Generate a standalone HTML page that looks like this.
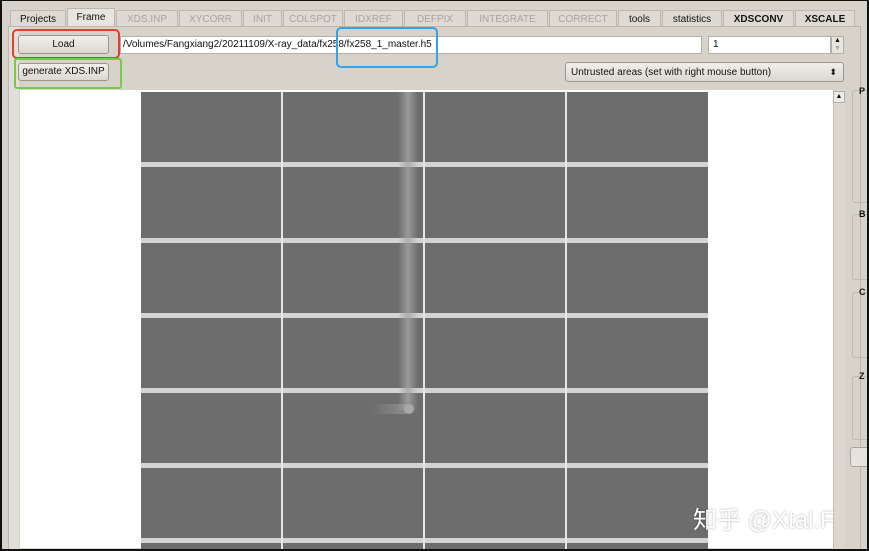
<!DOCTYPE html>
<html><head><meta charset="utf-8"><style>
*{margin:0;padding:0;box-sizing:border-box}
body{width:869px;height:551px;background:#d7d3cb;position:relative;overflow:hidden;font-family:"Liberation Sans",Arial,sans-serif;font-size:10px;color:#111}
.a{position:absolute}
.frame{left:0;top:0;width:869px;height:551px;border:2px solid #111;border-top:1px solid #111}
.tab{position:absolute;top:10px;height:16px;border:1px solid #bdb8ae;border-bottom:none;background:#dedad3;text-align:center;line-height:17px;font-size:10px;color:#a9a49c}
.on{color:#111}
.btn{position:absolute;border:1px solid #9a968f;border-radius:3px;background:linear-gradient(#f1efeb,#dcd8d0);text-align:center;font-size:10px}
.inp{position:absolute;background:#fff;border:1px solid #b4b0a8;font-size:10px;line-height:16px;padding-left:2px}
.hb{position:absolute;left:141px;width:567px;height:5px;background:#d4d4d4}
.vl{position:absolute;top:92px;width:2px;height:459px;background:#e6e6e6}
</style></head><body>
<div class="a" style="left:9px;top:26px;width:10px;height:525px;background:#e2dfd9"></div>
<div class="tab on" style="left:10px;width:56px">Projects</div>
<div class="tab on" style="left:67px;width:48px;top:8px;height:18px;line-height:18px;background:#e8e5df">Frame</div>
<div class="tab" style="left:116px;width:62px">XDS.INP</div>
<div class="tab" style="left:179px;width:63px">XYCORR</div>
<div class="tab" style="left:243px;width:39px">INIT</div>
<div class="tab" style="left:283px;width:60px">COLSPOT</div>
<div class="tab" style="left:344px;width:59px">IDXREF</div>
<div class="tab" style="left:404px;width:62px">DEFPIX</div>
<div class="tab" style="left:467px;width:81px">INTEGRATE</div>
<div class="tab" style="left:549px;width:68px">CORRECT</div>
<div class="tab on" style="left:618px;width:43px">tools</div>
<div class="tab on" style="left:662px;width:60px">statistics</div>
<div class="tab on" style="left:723px;width:71px;font-weight:bold">XDSCONV</div>
<div class="tab on" style="left:795px;width:60px;font-weight:bold">XSCALE</div>
<div class="a" style="left:8px;top:26px;width:853px;height:525px;border:1px solid #bdb8ae;border-bottom:none"></div>

<div class="btn" style="left:18px;top:35px;width:91px;height:19px;line-height:17px">Load</div>
<div class="a" style="left:12px;top:29px;width:108px;height:30px;border:2px solid #e0412b;border-radius:5px"></div>
<div class="btn" style="left:18px;top:63px;width:91px;height:18px;line-height:16px">generate XDS.INP</div>
<div class="a" style="left:14px;top:58px;width:108px;height:31px;border:2px solid #77c94a;border-radius:3px"></div>

<div class="inp" style="left:120px;top:36px;width:582px;height:18px">/Volumes/Fangxiang2/20211109/X-ray_data/fx258/fx258_1_master.h5</div>
<div class="a" style="left:336px;top:27px;width:102px;height:41px;border:2px solid #36a3e0;border-radius:5px"></div>
<div class="inp" style="left:708px;top:36px;width:123px;height:18px;padding-left:4px">1</div>
<div class="a" style="left:831px;top:36px;width:13px;height:18px;background:#e8e5df;border:1px solid #b4b0a8;font-size:7px;line-height:8px;text-align:center">▲<br><span style="color:#aaa">▼</span></div>
<div class="btn" style="left:565px;top:62px;width:279px;height:20px;line-height:19px;text-align:left;padding-left:5px">Untrusted areas (set with right mouse button)<span style="position:absolute;right:6px;font-size:9px">⬍</span></div>

<div class="a" style="left:20px;top:90px;width:813px;height:458px;background:#fff"></div>
<div class="a" style="left:141px;top:92px;width:567px;height:459px;background:#6d6d6d"></div>
<div class="hb" style="top:162px"></div><div class="hb" style="top:238px"></div><div class="hb" style="top:313px"></div>
<div class="hb" style="top:388px"></div><div class="hb" style="top:463px"></div><div class="hb" style="top:538px"></div>
<div class="vl" style="left:281px"></div><div class="vl" style="left:423px"></div><div class="vl" style="left:565px"></div>
<div class="a" style="left:398px;top:92px;width:20px;height:318px;background:linear-gradient(90deg,rgba(150,150,150,0),rgba(165,165,165,.8),rgba(150,150,150,0))"></div>
<div class="a" style="left:372px;top:404px;width:38px;height:10px;background:linear-gradient(90deg,rgba(140,140,140,0),rgba(160,160,160,.7));border-radius:5px"></div>
<div class="a" style="left:404px;top:404px;width:10px;height:10px;background:#a8a8a8;border-radius:50%"></div>

<div class="a" style="left:833px;top:90px;width:12px;height:458px;background:#dcd8d0;border-left:1px solid #c3bfb7"></div>
<div class="a" style="left:833px;top:91px;width:12px;height:12px;background:#eeebe6;border:1px solid #b4b0a8;font-size:7px;text-align:center;line-height:10px">▲</div>
<div class="a" style="left:852px;top:90px;width:17px;height:113px;border:1px solid #c0bbb2;border-right:none;border-radius:3px"></div>
<div class="a" style="left:859px;top:86px;font-size:9px;font-weight:bold">P</div>
<div class="a" style="left:852px;top:214px;width:17px;height:66px;border:1px solid #c0bbb2;border-right:none;border-radius:3px"></div>
<div class="a" style="left:859px;top:209px;font-size:9px;font-weight:bold">B</div>
<div class="a" style="left:852px;top:292px;width:17px;height:66px;border:1px solid #c0bbb2;border-right:none;border-radius:3px"></div>
<div class="a" style="left:859px;top:287px;font-size:9px;font-weight:bold">C</div>
<div class="a" style="left:852px;top:376px;width:17px;height:64px;border:1px solid #c0bbb2;border-right:none;border-radius:3px"></div>
<div class="a" style="left:859px;top:371px;font-size:9px;font-weight:bold">Z</div>
<div class="a" style="left:850px;top:447px;width:19px;height:20px;border:1px solid #a9a49c;border-right:none;border-radius:3px;background:#e6e3dd"></div>

<div class="a" style="left:693px;top:500px;font-size:24px;color:#fff;font-family:'Liberation Sans','Noto Sans CJK SC',sans-serif;text-shadow:0 0 2px rgba(0,0,0,.35)">知乎 @Xtal.F</div>
<div class="a frame"></div>
</body></html>
